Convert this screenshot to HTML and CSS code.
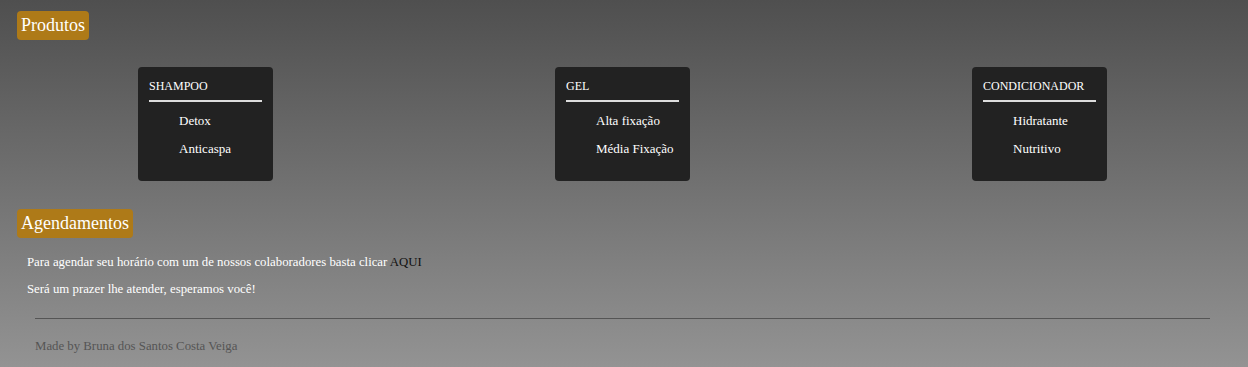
FILE: index.html
```html
<!DOCTYPE html>
<html lang="pt-BR">
<head>
    <meta charset="UTF-8">
    <meta name="viewport" content="width=device-width, initial-scale=1.0">
    <title>Barbearia</title>
    <link rel="stylesheet" href="styles.css">
</head>
<body>
    <section class="produtos">
        <h2 class="titulo">Produtos</h2>

        <div class="lista-produtos">
            <div class="card">
                <h3>SHAMPOO</h3>
                <ul>
                    <li>Detox</li>
                    <li>Anticaspa</li>
                </ul>
            </div>
            <div class="card">
                <h3>GEL</h3>
                <ul>
                    <li>Alta fixação</li>
                    <li>Média Fixação</li>
                </ul>
            </div>
            <div class="card">
                <h3>CONDICIONADOR</h3>
                <ul>
                    <li>Hidratante</li>
                    <li>Nutritivo</li>
                </ul>
            </div>
        </div>
    </section>

    <section class="agendamentos">
        <h2 class="titulo">Agendamentos</h2>
        <p>Para agendar seu horário com um de nossos colaboradores basta clicar <a href="#">AQUI</a></p>
        <p>Será um prazer lhe atender, esperamos você!</p>
    </section>

    <footer>
        <hr>
        <p>Made by Bruna dos Santos Costa Veiga</p>
    </footer>
</body>
</html>
```

FILE: styles.css
```css
body {
    font-family: 'Liberation Serif', 'Times New Roman', serif;
    background: linear-gradient(180deg, #4f4f4f 0%, #939393 100%);
    margin: 0;
    min-height: 100vh;
    color: white;
}

.titulo {
    display: inline-block;
    background-color: #ae7a18;
    color: white;
    font-size: 18px;
    font-weight: normal;
    line-height: 29px;
    padding: 0 4px;
    border-radius: 4px;
    margin: 0;
}

.produtos {
    padding: 11px 0 0 17px;
}

.lista-produtos {
    display: flex;
    justify-content: space-around;
    margin: 27px 0 0 -20px;
}

.card {
    width: 135px;
    height: 114px;
    box-sizing: border-box;
    padding: 11px;
    background-color: #222;
    border-radius: 4px;
}

.card h3 {
    margin: 0;
    font-size: 12px;
    font-weight: normal;
    line-height: 16px;
    padding-bottom: 6px;
    border-bottom: 2px solid #ddd;
}

.card ul {
    list-style: none;
    margin: 5px 0 0;
    padding-left: 30px;
    font-size: 13px;
    line-height: 28px;
}

.agendamentos {
    padding: 28px 0 0 17px;
}

.agendamentos p {
    font-size: 12.8px;
    margin: 0;
    padding-left: 10px;
    line-height: 27px;
}

.agendamentos .titulo + p {
    margin-top: 11px;
}

.agendamentos a {
    color: #111;
    text-decoration: none;
}

footer {
    padding: 0 38px 0 35px;
}

footer hr {
    border: none;
    border-top: 1px solid #555;
    margin: 15px 0 0;
}

footer p {
    color: #555;
    font-size: 12.8px;
    margin: 20px 0 0;
}
```
